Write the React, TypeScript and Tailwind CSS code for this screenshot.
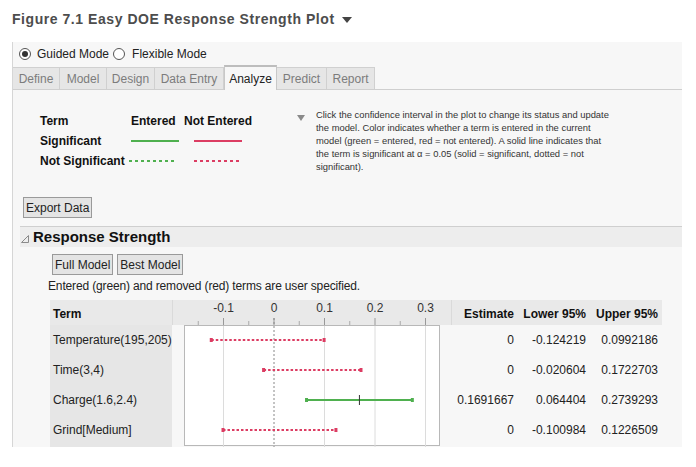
import React from "react";

const F = { fontFamily: '"Liberation Sans", Arial, sans-serif' };

const tabs = [
  { t: "Define", w: 47 },
  { t: "Model", w: 47 },
  { t: "Design", w: 48 },
  { t: "Data Entry", w: 69 },
  { t: "Analyze", w: 53, active: true },
  { t: "Predict", w: 50 },
  { t: "Report", w: 48 },
];

const rows = [
  { term: "Temperature(195,205)", est: "0", lo: -0.124219, hi: 0.0992186, loS: "-0.124219", hiS: "0.0992186", green: false },
  { term: "Time(3,4)", est: "0", lo: -0.020604, hi: 0.1722703, loS: "-0.020604", hiS: "0.1722703", green: false },
  { term: "Charge(1.6,2.4)", est: "0.1691667", lo: 0.064404, hi: 0.2739293, loS: "0.064404", hiS: "0.2739293", green: true, mid: 0.1691667 },
  { term: "Grind[Medium]", est: "0", lo: -0.100984, hi: 0.1226509, loS: "-0.100984", hiS: "0.1226509", green: false },
];

const RED = "#dc3d63";
const GREEN = "#4fb04f";

function Plot() {
  const X = (v: number) => 102 + 505 * v;
  const majors = [-0.1, 0, 0.1, 0.2, 0.3];
  const minors = [-0.15, -0.05, 0.05, 0.15, 0.25];
  return (
    <svg width="268" height="147" viewBox="0 0 268 147" className="block">
      <rect x="0" y="0" width="268" height="25" fill="#e9e9e9" />
      <line x1="0.5" y1="0" x2="0.5" y2="25" stroke="#dadada" />
      {majors.map((m) => (
        <text key={m} x={X(m)} y="12" fontSize="12" fill="#333" textAnchor="middle" style={F}>
          {m === 0 ? "0" : m.toFixed(1)}
        </text>
      ))}
      {majors.map((m) => (
        <line key={"t" + m} x1={X(m)} y1="18" x2={X(m)} y2="25" stroke="#999" strokeWidth="1" />
      ))}
      {minors.map((m) => (
        <line key={"n" + m} x1={X(m)} y1="21" x2={X(m)} y2="25" stroke="#aaa" strokeWidth="1" />
      ))}
      <rect x="12.5" y="25.5" width="255" height="120" fill="#fff" stroke="#b8b8b8" />
      {[-0.1, 0.1, 0.2, 0.3].map((m) => (
        <line key={"g" + m} x1={X(m)} y1="26" x2={X(m)} y2="147" stroke="#dcdcdc" strokeWidth="1" />
      ))}
      <line x1={X(0)} y1="18" x2={X(0)} y2="147" stroke="#888" strokeWidth="1" strokeDasharray="2 2" />
      {rows.map((r, i) => {
        const y = 40 + i * 30;
        const c = r.green ? GREEN : RED;
        return (
          <g key={i}>
            <line
              x1={X(r.lo)}
              y1={y}
              x2={X(r.hi)}
              y2={y}
              stroke={c}
              strokeWidth="2"
              strokeDasharray={r.green ? undefined : "2.5 2"}
            />
            <rect x={X(r.lo) - 1.5} y={y - 2} width="3" height="4" fill={c} />
            <rect x={X(r.hi) - 1.5} y={y - 2} width="3" height="4" fill={c} />
            {r.mid !== undefined && (
              <line x1={X(r.mid)} y1={y - 5} x2={X(r.mid)} y2={y + 5} stroke="#333" strokeWidth="1" />
            )}
          </g>
        );
      })}
    </svg>
  );
}

function Radio({ on }: { on?: boolean }) {
  return (
    <span className="w-[12px] h-[12px] rounded-full border border-[#555] bg-white flex items-center justify-center">
      {on && <span className="w-[6px] h-[6px] rounded-full bg-[#333]" />}
    </span>
  );
}

function LegendLine({ color, dashed }: { color: string; dashed?: boolean }) {
  return (
    <svg width="48" height="2" viewBox="0 0 48 2" className="block">
      <line x1="0" y1="1" x2="48" y2="1" stroke={color} strokeWidth="2" strokeDasharray={dashed ? "3 3" : undefined} />
    </svg>
  );
}

export default function App() {
  return (
    <div className="w-[696px] h-[467px] bg-white overflow-hidden text-[#222]" style={F}>
      <div className="h-[42px] pl-[12px] pt-[10px] flex items-start">
        <span className="text-[14px] font-bold tracking-[0.55px] text-[#4d4d4d] leading-[18px]">
          Figure 7.1 Easy DOE Response Strength Plot
        </span>
        <svg width="10" height="6" viewBox="0 0 10 6" className="ml-[7px] mt-[7px]">
          <path d="M0 0 L10 0 L5 6 Z" fill="#444" />
        </svg>
      </div>
      <div className="ml-[12px] w-[670px] h-[405px] bg-[#f7f7f7] border-l border-[#d6d6d6] flex flex-col">
        <div className="h-[23px] flex items-center pl-[6px] text-[12px] text-[#222]">
          <Radio on />
          <span className="ml-[6px]">Guided Mode</span>
          <span className="ml-[4px]"><Radio /></span>
          <span className="ml-[7px]">Flexible Mode</span>
        </div>
        <div className="h-[25px] flex items-end border-b border-[#cfcfcf]">
          {tabs.map((t) =>
            t.active ? (
              <div
                key={t.t}
                style={{ width: t.w }}
                className="h-[25px] -mb-px bg-[#f7f7f7] border-t-2 border-x border-[#c8c8c8] border-t-[#bdbdbd] text-[12px] text-[#222] flex items-center justify-center"
              >
                {t.t}
              </div>
            ) : (
              <div
                key={t.t}
                style={{ width: t.w }}
                className="h-[22px] bg-[#e6e6e6] border-t border-r border-[#d0d0d0] text-[12px] text-[#7c7c7c] flex items-center justify-center"
              >
                {t.t}
              </div>
            )
          )}
        </div>
        <div className="flex mt-[21px] h-[66px]">
          <div className="ml-[27px] w-[247px] text-[12px] font-bold text-[#111]">
            <div className="flex h-[20px] items-center">
              <span className="w-[91px]">Term</span>
              <span className="w-[53px]">Entered</span>
              <span>Not Entered</span>
            </div>
            <div className="flex h-[20px] items-center">
              <span className="w-[91px]">Significant</span>
              <span className="w-[63px]"><LegendLine color={GREEN} /></span>
              <LegendLine color={RED} />
            </div>
            <div className="flex h-[20px] items-center">
              <span className="w-[89px]">Not Significant</span>
              <span className="w-[65px]"><LegendLine color={GREEN} dashed /></span>
              <LegendLine color={RED} dashed />
            </div>
          </div>
          <svg width="8" height="6" viewBox="0 0 8 6" className="ml-[10px] mt-[4px]">
            <path d="M0 0 L8 0 L4 6 Z" fill="#8a8a8a" />
          </svg>
          <div className="ml-[11px] -mt-[3px] text-[9.4px] leading-[13px] text-[#333] whitespace-nowrap">
            <div>Click the confidence interval in the plot to change its status and update</div>
            <div>the model. Color indicates whether a term is entered in the current</div>
            <div>model (green = entered, red = not entered). A solid line indicates that</div>
            <div>the term is significant at α = 0.05 (solid = significant, dotted = not</div>
            <div>significant).</div>
          </div>
        </div>
        <div className="mt-[20px] ml-[10px] flex">
          <button className="h-[21px] px-[2px] bg-[#e4e4e4] border border-[#9a9a9a] text-[12px] text-[#222] leading-none">
            Export Data
          </button>
        </div>
        <div className="mt-[8px] ml-[7px] h-[21px] bg-[#ededed] border-t border-[#cfcfcf] flex items-center">
          <svg width="8" height="8" viewBox="0 0 8 8" className="ml-[1px] mt-[3px]">
            <path d="M7.5 0.5 L7.5 7.5 L0.5 7.5 Z" fill="none" stroke="#8a8a8a" strokeWidth="1" />
          </svg>
          <span className="ml-[4px] text-[15px] font-bold text-[#111]">Response Strength</span>
        </div>
        <div className="ml-[39px] mt-[7px] flex gap-[4px]">
          <button className="h-[21px] px-[2px] bg-[#e4e4e4] border border-[#9a9a9a] text-[12px] text-[#222] leading-none">
            Full Model
          </button>
          <button className="h-[21px] px-[2px] bg-[#e4e4e4] border border-[#9a9a9a] text-[12px] text-[#222] leading-none">
            Best Model
          </button>
        </div>
        <div className="ml-[35px] mt-[2px] h-[18px] flex items-center text-[12px] tracking-[-0.15px] text-[#222]">
          Entered (green) and removed (red) terms are user specified.
        </div>
        <div className="ml-[37px] mt-[5px] flex">
          <div className="w-[122px] bg-[#e6e6e6] flex flex-col">
            <div className="h-[25px] bg-[#e9e9e9] flex items-end pb-[2px] pl-[3px] text-[12px] font-bold text-[#111]">Term</div>
            {rows.map((r) => (
              <div key={r.term} className="h-[30px] flex items-center pl-[3px] text-[12px] text-[#222]">
                {r.term}
              </div>
            ))}
          </div>
          <Plot />
          <div className="flex flex-col">
            <div className="h-[25px] w-[222px] bg-[#e9e9e9] flex items-end pb-[2px] text-[12px] font-bold text-[#111] whitespace-nowrap">
              <span className="w-[12px] h-[25px] self-stretch border-r border-[#dadada]" />
              <span className="w-[62px] text-right">Estimate</span>
              <span className="w-[72px] text-right">Lower 95%</span>
              <span className="w-[72px] text-right">Upper 95%</span>
            </div>
            {rows.map((r) => (
              <div key={r.term} className="h-[30px] flex items-center text-[12px] text-[#222] whitespace-nowrap">
                <span className="w-[74px] text-right">{r.est}</span>
                <span className="w-[72px] text-right">{r.loS}</span>
                <span className="w-[72px] text-right">{r.hiS}</span>
              </div>
            ))}
          </div>
        </div>
      </div>
    </div>
  );
}
